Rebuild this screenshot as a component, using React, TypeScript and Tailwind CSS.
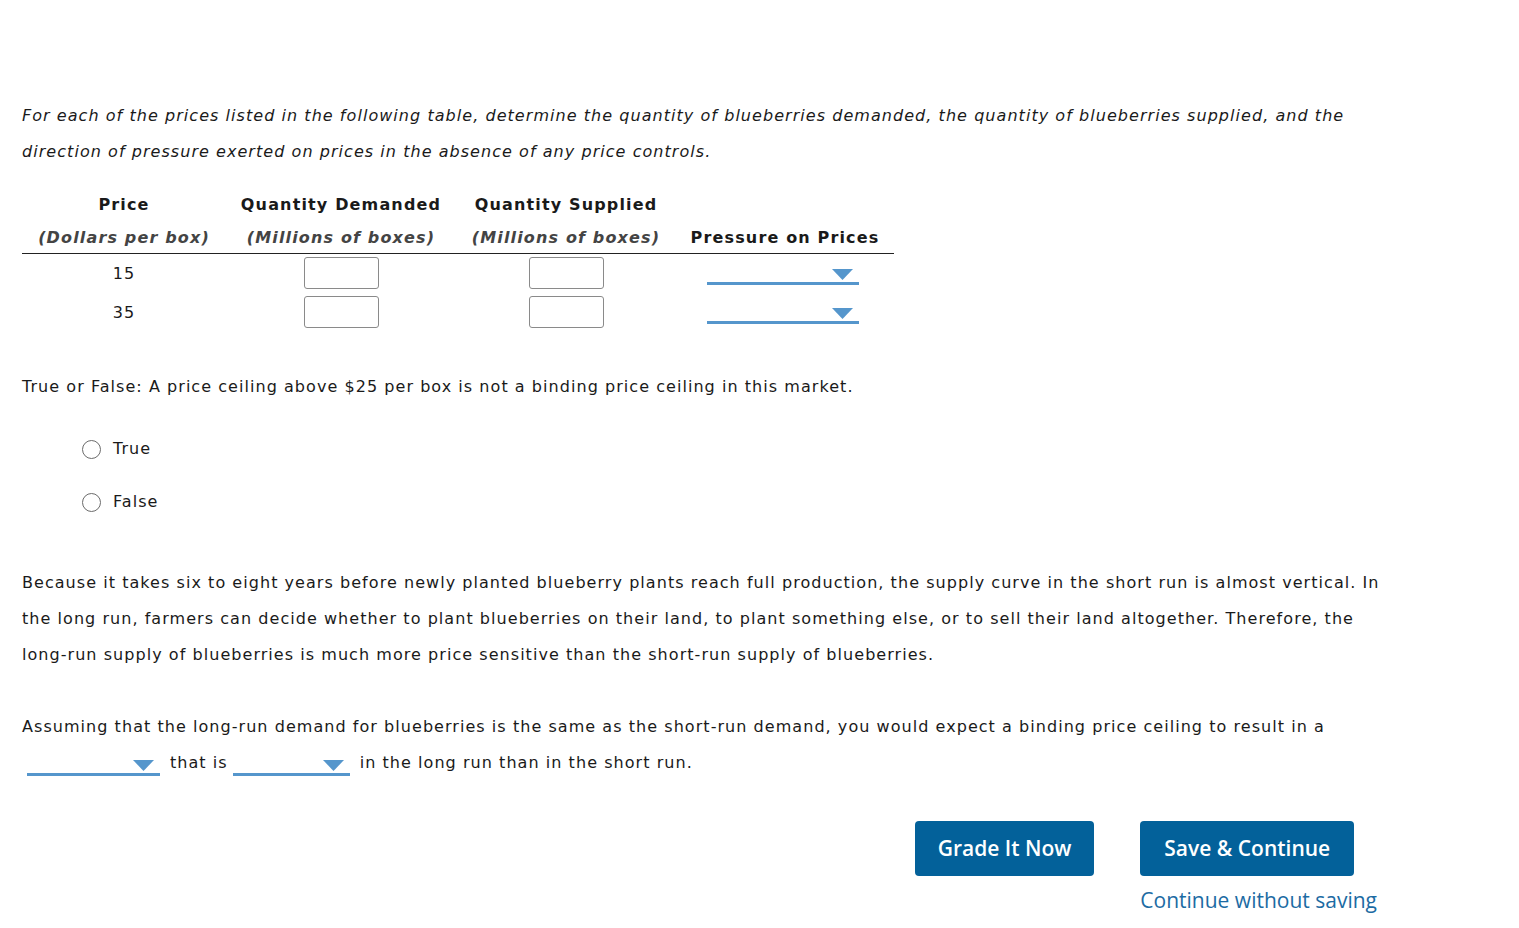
import { useState } from 'react';

function Dropdown({ width }: { width: string }) {
    return (
        <div className={`relative inline-block h-[24px] border-b-[3px] border-[#5596cc] align-middle ${width}`}>
            <svg className="absolute right-[6px] top-[8px]" width="21" height="11" viewBox="0 0 21 11">
                <polygon points="0,0 21,0 10.5,11" fill="#5596cc" />
            </svg>
        </div>
    );
}

function NumBox() {
    return <input className="w-[75px] h-[32px] border border-[#8a8a8a] rounded-[3px] bg-white" />;
}

export default function App() {
    const [answer, setAnswer] = useState('');

    const rows = ['15', '35'];

    return (
        <div className="min-h-[928px] bg-white text-[#1a1a1a] text-[16px] tracking-[1.05px]" style={{ fontFamily: '"DejaVu Sans", Verdana, sans-serif' }}>
            <div className="pl-[22px] pr-[120px] pt-[98px]">
                <p className="italic leading-[36px]">
                    For each of the prices listed in the following table, determine the quantity of blueberries demanded, the quantity of blueberries supplied, and the direction of pressure exerted on prices in the absence of any price controls.
                </p>

                <table className="mt-[18px] border-collapse">
                    <thead className="tracking-[1.15px]">
                        <tr className="font-bold text-center">
                            <th className="w-[204px] h-[33px]">Price</th>
                            <th className="w-[230px]">Quantity Demanded</th>
                            <th className="w-[220px]">Quantity Supplied</th>
                            <th className="w-[218px]"></th>
                        </tr>
                        <tr className="border-b border-[#222] text-center">
                            <th className="h-[32px] pt-[2px] italic font-bold text-[#444]">(Dollars per box)</th>
                            <th className="pt-[2px] italic font-bold text-[#444]">(Millions of boxes)</th>
                            <th className="pt-[2px] italic font-bold text-[#444]">(Millions of boxes)</th>
                            <th className="pt-[2px] font-bold">Pressure on Prices</th>
                        </tr>
                    </thead>
                    <tbody>
                        {rows.map((r) => (
                            <tr key={r} className="text-center">
                                <td className="h-[39px] pt-[2px]">{r}</td>
                                <td><NumBox /></td>
                                <td><NumBox /></td>
                                <td className="pr-[5px]"><Dropdown width="w-[152px]" /></td>
                            </tr>
                        ))}
                    </tbody>
                </table>

                <p className="mt-[44px]">
                    True or False: A price ceiling above $25 per box is not a binding price ceiling in this market.
                </p>

                <div className="mt-[38px] pl-[60px] flex flex-col gap-[29px]">
                    {['True', 'False'].map((opt) => (
                        <label key={opt} className="flex items-center gap-[12px] cursor-pointer">
                            <span
                                onClick={() => setAnswer(opt)}
                                className="w-[19px] h-[19px] rounded-full border border-[#6b6b6b] bg-white flex items-center justify-center"
                            >
                                {answer === opt && <span className="w-[9px] h-[9px] rounded-full bg-[#333]" />}
                            </span>
                            <span>{opt}</span>
                        </label>
                    ))}
                </div>

                <p className="mt-[51px] leading-[36px]">
                    Because it takes six to eight years before newly planted blueberry plants reach full production, the supply curve in the short run is almost vertical. In the long run, farmers can decide whether to plant blueberries on their land, to plant something else, or to sell their land altogether. Therefore, the long-run supply of blueberries is much more price sensitive than the short-run supply of blueberries.
                </p>

                <p className="mt-[36px] leading-[36px]">
                    Assuming that the long-run demand for blueberries is the same as the short-run demand, you would expect a binding price ceiling to result in a
                    <br />
                    <span className="ml-[5px]"><Dropdown width="w-[133px]" /></span>
                    <span className="ml-[10px]">that is</span>
                    <span className="ml-[5px]"><Dropdown width="w-[117px]" /></span>
                    <span className="ml-[10px]">in the long run than in the short run.</span>
                </p>

                <div className="mt-[40px] flex justify-end pr-[22px] tracking-normal" style={{ fontFamily: '"Open Sans", sans-serif' }}>
                    <div className="flex gap-[46px] items-start">
                        <button className="h-[55px] px-[23px] bg-[#03619a] text-white text-[21px] font-semibold rounded-[4px]">
                            Grade It Now
                        </button>
                        <div className="flex flex-col items-start">
                            <button className="h-[55px] px-[24px] bg-[#03619a] text-white text-[21px] font-semibold rounded-[4px]">
                                Save &amp; Continue
                            </button>
                            <a href="#" className="mt-[10px] text-[21px] text-[#1c6ba3] leading-[28px]">
                                Continue without saving
                            </a>
                        </div>
                    </div>
                </div>
            </div>
        </div>
    );
}
